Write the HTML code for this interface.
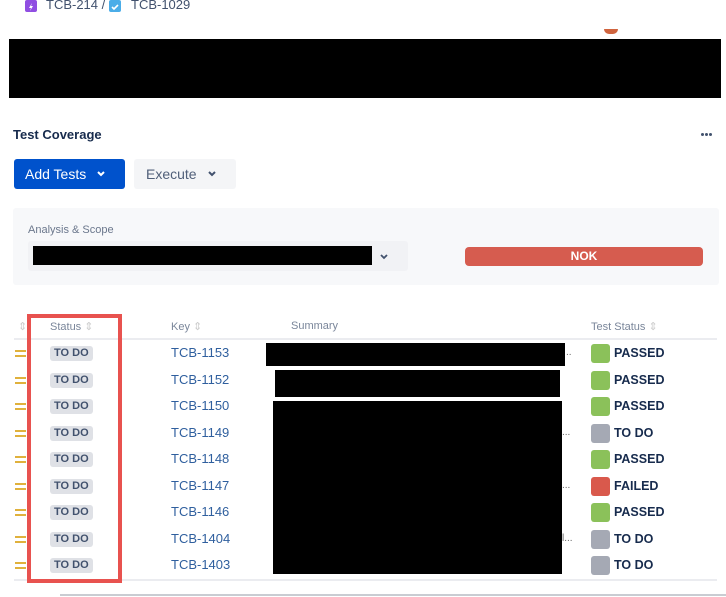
<!DOCTYPE html>
<html><head><meta charset="utf-8"><style>
*{margin:0;padding:0;box-sizing:border-box}
body{width:726px;height:597px;background:#fff;position:relative;overflow:hidden;font-family:"Liberation Sans",Arial,sans-serif;color:#172b4d}
.a{position:absolute}
.blk{position:absolute;background:#000}
.lz{font-size:11px;font-weight:bold;color:#42526e;background:#dfe1e6;border-radius:3px;padding:2px 4px;line-height:11px}
.key{font-size:13px;color:#2f5f9e}
.sq{width:19px;height:19px;border-radius:3px}
.ts{font-size:12.5px;font-weight:bold;color:#172b4d}
.pri{width:11px;height:2px;background:#e0b13c}
.h{font-size:11px;color:#7a869a}
.dot{position:absolute;width:3px;height:3px;border-radius:50%;background:#42526e}
</style></head><body>
<!-- breadcrumb -->
<div class="a" style="left:25px;top:0;width:12px;height:12px;background:#904ee2;border-radius:2px"><svg width="12" height="12" viewBox="0 0 12 12"><path d="M7 2 L4 7 H6 L5 10 L8 5 H6 Z" fill="#fff"/></svg></div>
<div class="a" style="left:46px;top:-3px;font-size:13px;color:#42526e">TCB-214 /</div>
<div class="a" style="left:109px;top:0;width:12px;height:12px;background:#4bade8;border-radius:2px"><svg width="12" height="12" viewBox="0 0 12 12"><path d="M3 6 L5 8 L9 4" stroke="#fff" stroke-width="1.6" fill="none"/></svg></div>
<div class="a" style="left:131px;top:-3px;font-size:13px;color:#42526e">TCB-1029</div>
<div class="a" style="left:604px;top:29px;width:14px;height:5px;background:#d0643e;border-radius:0 0 7px 7px"></div>
<div class="blk" style="left:9px;top:39px;width:712px;height:59px"></div>

<div class="a" style="left:13px;top:127px;font-size:13px;font-weight:bold">Test Coverage</div>
<div class="dot" style="left:701px;top:133px"></div><div class="dot" style="left:705px;top:133px"></div><div class="dot" style="left:709px;top:133px"></div>

<div class="a" style="left:14px;top:159px;width:111px;height:30px;background:#0052cc;border-radius:3px;color:#fff;font-size:14px;line-height:30px;padding-left:11px">Add Tests</div>
<svg class="a" style="left:96px;top:170px" width="10" height="8" viewBox="0 0 10 8"><path d="M2 2 L5 5 L8 2" stroke="#fff" stroke-width="2" fill="none"/></svg>
<div class="a" style="left:134px;top:159px;width:102px;height:30px;background:#f4f5f7;border-radius:3px;color:#505f79;font-size:14px;line-height:30px;padding-left:12px">Execute</div>
<svg class="a" style="left:207px;top:170px" width="10" height="8" viewBox="0 0 10 8"><path d="M2 2 L5 5 L8 2" stroke="#42526e" stroke-width="2" fill="none"/></svg>

<div class="a" style="left:13px;top:208px;width:706px;height:77px;background:#f7f8fa;border-radius:3px"></div>
<div class="a" style="left:28px;top:224px;font-size:11px;color:#6b778c">Analysis &amp; Scope</div>
<div class="a" style="left:28px;top:241px;width:380px;height:30px;background:#f1f2f5;border-radius:3px"></div>
<div class="blk" style="left:33px;top:246px;width:339px;height:19px"></div>
<svg class="a" style="left:379px;top:253px" width="10" height="8" viewBox="0 0 10 8"><path d="M2 2 L5 5 L8 2" stroke="#42526e" stroke-width="1.8" fill="none"/></svg>
<div class="a" style="left:465px;top:247px;width:238px;height:19px;background:#d65c4f;border-radius:4px;color:#fff;font-size:12px;font-weight:bold;text-align:center;line-height:19px">NOK</div>

<!-- table header -->
<div class="a h" style="left:18px;top:320px;color:#ccc">&#8661;</div>
<div class="a h" style="left:50px;top:320px">Status <span style="color:#ccc">&#8661;</span></div>
<div class="a h" style="left:171px;top:320px">Key <span style="color:#ccc">&#8661;</span></div>
<div class="a h" style="left:291px;top:320px">Summary</div>
<div class="a h" style="left:591px;top:320px">Test Status <span style="color:#ccc">&#8661;</span></div>
<div class="a" style="left:14px;top:338px;width:703px;height:2px;background:#ebecf0"></div>
<div class="a" style="left:14px;top:579px;width:703px;height:2px;background:#ebecf0"></div>
<div class="a" style="left:60px;top:594px;width:666px;height:2px;background:#c9ccd2"></div>

<div id="rows"></div>
<div class="blk" style="left:266px;top:343px;width:299px;height:23px"></div>
<div class="blk" style="left:275px;top:370px;width:285px;height:27px"></div>
<div class="blk" style="left:273px;top:401px;width:289px;height:173px"></div>
<div class="a" style="left:566px;top:347px;font-size:10px;color:#666">..</div>
<div class="a" style="left:562px;top:427px;font-size:10px;color:#666">...</div>
<div class="a" style="left:562px;top:480px;font-size:10px;color:#666">...</div>
<div class="a" style="left:562px;top:533px;font-size:10px;color:#666">l...</div>

<div class="a" style="left:27px;top:314px;width:95px;height:269px;border:4px solid #e8524f"></div>

<script>
var d=[["TCB-1153","PASSED"],["TCB-1152","PASSED"],["TCB-1150","PASSED"],["TCB-1149","TO DO"],["TCB-1148","PASSED"],["TCB-1147","FAILED"],["TCB-1146","PASSED"],["TCB-1404","TO DO"],["TCB-1403","TO DO"]];
var c={"PASSED":"#8bc15a","TO DO":"#a5a9b4","FAILED":"#d9594c"};
var h="";
d.forEach(function(r,i){var y=353+i*26.5;
h+='<div class="a pri" style="left:15px;top:'+(y-3)+'px"></div><div class="a pri" style="left:15px;top:'+(y+2)+'px"></div>';
h+='<div class="a lz" style="left:50px;top:'+(y-7)+'px">TO DO</div>';
h+='<div class="a key" style="left:171px;top:'+(y-8)+'px">'+r[0]+'</div>';
h+='<div class="a sq" style="left:591px;top:'+(y-9)+'px;background:'+c[r[1]]+'"></div>';
h+='<div class="a ts" style="left:614px;top:'+(y-7)+'px">'+r[1]+'</div>';});
document.getElementById("rows").innerHTML=h;
</script>
</body></html>
